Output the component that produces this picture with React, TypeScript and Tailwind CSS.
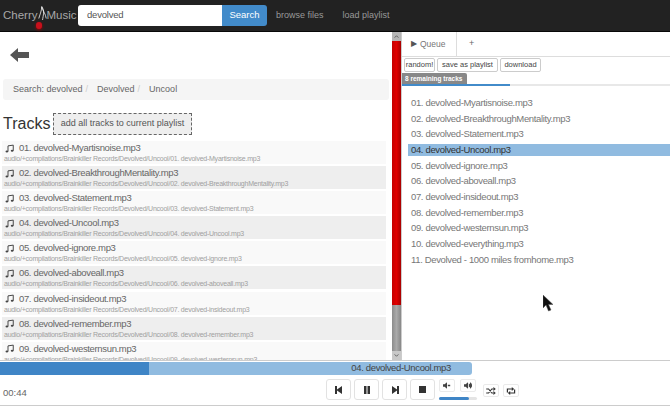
import React from "react";

const tracks = [
  "01. devolved-Myartisnoise.mp3",
  "02. devolved-BreakthroughMentality.mp3",
  "03. devolved-Statement.mp3",
  "04. devolved-Uncool.mp3",
  "05. devolved-ignore.mp3",
  "06. devolved-aboveall.mp3",
  "07. devolved-insideout.mp3",
  "08. devolved-remember.mp3",
  "09. devolved-westernsun.mp3",
];

const queue = [
  ...tracks,
  "10. devolved-everything.mp3",
  "11. Devolved - 1000 miles fromhome.mp3",
];

function NoteIcon() {
  return (
    <svg viewBox="0 0 12 12" className="w-[9px] h-[9px] shrink-0 fill-none stroke-[#444]">
      <path d="M4 10V2.500L11 1.500V9" strokeWidth="1.300" />
      <ellipse cx="2.500" cy="10" rx="1.800" ry="1.300" fill="#444" stroke="none" />
      <ellipse cx="9.500" cy="9" rx="1.800" ry="1.300" fill="#444" stroke="none" />
    </svg>
  );
}

function TrackRow({ name, odd }: { name: string; odd: boolean }) {
  return (
    <div className={`h-[23px] mb-[2.1px] pl-[2px] shrink-0 overflow-hidden ${odd ? "bg-[#f9f9f9]" : "bg-[#eeeeee]"}`}>
      <div className="flex items-center gap-[5px] h-[13px] pt-[1px] pl-[1px]">
        <NoteIcon />
        <span className="text-[9.5px] tracking-[-0.35px] text-[#666] leading-[12px]">{name}</span>
      </div>
      <div className="text-[7px] tracking-[-0.24px] text-[#a0a0a0] leading-[9px] whitespace-nowrap">
        audio/+compilations/Brainkiller Records/Devolved/Uncool/{name}
      </div>
    </div>
  );
}

function CtrlButton({ children }: { children: React.ReactNode }) {
  return (
    <button className="w-[25px] h-[21px] flex items-center justify-center border border-[#e2e2e2] rounded-[3px] bg-white">
      {children}
    </button>
  );
}

function SmallButton({ children }: { children: React.ReactNode }) {
  return (
    <button className="w-[16px] h-[13px] flex items-center justify-center border border-[#eaeaea] rounded-[2px] bg-white">
      {children}
    </button>
  );
}

export default function App() {
  return (
    <div className="relative w-[670px] h-[406px] overflow-hidden bg-white flex flex-col font-['Liberation_Sans',Arial,sans-serif]">
      {/* navbar */}
      <div className="h-[32px] shrink-0 bg-[#222222] border-b border-[#080808] flex items-center">
        <div className="w-[78px] shrink-0 relative flex items-center pl-[3px] text-[11.5px] text-[#a8a8a8] h-full">
          <span>Cherry</span>
          <svg viewBox="0 0 12 24" className="w-[9px] h-[20px] mt-[-3px] stroke-white fill-none shrink-0" strokeWidth="1">
            <path d="M6 20 C7 14 9 8 5 2 C5 8 2 14 1 18 M5 3 C7 8 10 12 11 18" />
          </svg>
          <span>Music</span>
          <span className="absolute left-[36px] top-[22px] w-[6px] h-[7px] rounded-full bg-[#c8101c] shadow-[0_1px_3px_#a00000]" />
        </div>
        <div className="w-[144px] h-[21px] bg-white rounded-l-[3px] flex items-center pl-[9px] text-[9.5px] tracking-[-0.2px] text-[#555]">
          devolved
        </div>
        <button className="w-[45px] h-[21px] bg-[#428bca] rounded-r-[3px] text-[9.5px] text-white">Search</button>
        <span className="ml-[9px] text-[9px] text-[#999]">browse files</span>
        <span className="ml-[19px] text-[9px] text-[#999]">load playlist</span>
      </div>

      {/* main area */}
      <div className="h-[328px] shrink-0 flex">
        <div className="w-[392px] shrink-0 flex flex-col overflow-hidden">
          <div className="h-[47px] shrink-0 flex items-center pl-[10px] pb-[10px]">
            <svg viewBox="0 0 19 14" className="w-[19px] h-[14px] fill-[#555] mt-[8px]">
              <path d="M0 7 8 0v4h11v6H8v4z" />
            </svg>
          </div>
          <div className="h-[21px] mx-[3px] shrink-0 bg-[#f5f5f5] rounded-[3px] flex items-center pl-[10px] text-[9px] text-[#666]">
            <span>Search: devolved</span>
            <span className="text-[#ccc] ml-[3px]">/</span>
            <span className="ml-[9px]">Devolved</span>
            <span className="text-[#ccc] ml-[3px]">/</span>
            <span className="ml-[9px]">Uncool</span>
          </div>
          <div className="mt-[13px] h-[22px] shrink-0 flex items-center pl-[3px]">
            <span className="text-[16px] text-[#333] w-[50px]">Tracks</span>
            <button className="w-[139px] h-[22px] bg-[#eeeeee] border border-dashed border-[#666] text-[9px] text-[#555]">
              add all tracks to current playlist
            </button>
          </div>
          <div className="mt-[6px] ml-[2px] w-[384px] flex flex-col">
            {tracks.map((t, i) => (
              <TrackRow key={t} name={t} odd={i % 2 === 0} />
            ))}
          </div>
        </div>

        {/* scrollbar */}
        <div className="w-[9px] shrink-0 flex flex-col bg-[#9a9a9a]">
          <div className="h-[9px] bg-[#b5b5b5] flex items-center justify-center">
            <svg viewBox="0 0 6 4" className="w-[5px] h-[3px] stroke-[#444] fill-none"><path d="M.5 3.500 3 1l2.500 2.500" /></svg>
          </div>
          <div className="h-[264px] bg-gradient-to-r from-[#c40000] via-[#e00000] to-[#a80000]" />
          <div className="flex-1 bg-gradient-to-r from-[#8c8c8c] via-[#aaaaaa] to-[#888888]" />
          <div className="h-[9px] bg-[#c8c8c8] flex items-center justify-center">
            <svg viewBox="0 0 6 4" className="w-[5px] h-[3px] stroke-[#444] fill-none"><path d="M.5.5 3 3 5.500.5" /></svg>
          </div>
        </div>

        {/* queue */}
        <div className="flex-1 flex flex-col min-w-0 border-l border-[#cccccc]">
          <div className="h-[25px] shrink-0 flex items-center border-b border-[#dddddd]">
            <div className="w-[55px] h-[25px] border-r border-[#dddddd] flex items-center pl-[9px] gap-[3px] text-[8.5px] text-[#777]">
              <span className="text-[8px] text-[#555]">▶</span> Queue
            </div>
            <span className="ml-[12px] text-[9px] text-[#666]">+</span>
          </div>
          <div className="flex gap-[2px] pl-[2px] pt-[1px] h-[15px] shrink-0">
            {["random!", "save as playlist", "download"].map((b, i) => (
              <button
                key={b}
                className={`h-[14px] border border-[#cccccc] rounded-[2px] text-[7.5px] text-[#444] ${i === 0 ? "w-[31px]" : i === 1 ? "w-[61px]" : "w-[41px]"}`}
              >
                {b}
              </button>
            ))}
          </div>
          <div className="w-[65px] h-[11px] mt-[1px] shrink-0 bg-[#888888] rounded-tr-[2px] text-[6.5px] font-bold text-white flex items-center pl-[3px]">
            8 remaining tracks
          </div>
          <div className="h-[2px] shrink-0 bg-[#e8e8e8]">
            <div className="w-[108px] h-[2px] bg-[#428bca]" />
          </div>
          <div className="mt-[11px] flex flex-col">
            {queue.map((t, i) => (
              <div
                key={t}
                className={`h-[12px] mb-[3.7px] ml-[6px] pl-[3px] flex items-center text-[9.5px] tracking-[-0.35px] ${i === 3 ? "bg-[#90bbe0] text-[#333]" : "text-[#777]"}`}
              >
                {t}
              </div>
            ))}
          </div>
        </div>
      </div>

      {/* player */}
      <div className="flex-1 flex flex-col border-t border-[#cccccc] border-b-[#cccccc] border-b">
        <div className="mt-[1px] w-[472px] h-[13px] shrink-0 rounded-r-[3px] bg-[#90bbe0] relative flex items-center justify-end pr-[21px] text-[9.5px] tracking-[-0.35px] text-[#444] overflow-hidden">
          <div className="absolute left-0 top-0 bottom-0 w-[149px] bg-[#3f85c6]" />
          <span className="relative">04. devolved-Uncool.mp3</span>
        </div>
        <div className="flex items-start">
          <span className="w-[326px] pt-[11px] pl-[3px] text-[9.5px] text-[#666] shrink-0">00:44</span>
          <div className="flex gap-[3px] pt-[4px]">
            <CtrlButton>
              <svg viewBox="0 0 8 8" className="w-[8px] h-[8px] fill-[#333]"><path d="M0 0h2v3.500L7 0v8L2 4.500V8H0z" /></svg>
            </CtrlButton>
            <CtrlButton>
              <svg viewBox="0 0 8 8" className="w-[8px] h-[8px] fill-[#333]"><path d="M1 0h2.500v8H1zM4.500 0H7v8H4.500z" /></svg>
            </CtrlButton>
            <CtrlButton>
              <svg viewBox="0 0 8 8" className="w-[8px] h-[8px] fill-[#333]"><path d="M8 0H6v3.500L1 0v8l5-3.500V8h2z" /></svg>
            </CtrlButton>
            <CtrlButton>
              <svg viewBox="0 0 8 8" className="w-[7px] h-[7px] fill-[#333]"><path d="M0 0h8v8H0z" /></svg>
            </CtrlButton>
          </div>
          <div className="ml-[4px] pt-[4px] w-[38px]">
            <div className="flex gap-[5px]">
              <SmallButton>
                <svg viewBox="0 0 10 8" className="w-[8px] h-[7px] fill-[#444]"><path d="M0 2.500h2L5 0v8L2 5.500H0zM6 3h3v2H6z" /></svg>
              </SmallButton>
              <SmallButton>
                <svg viewBox="0 0 10 8" className="w-[8px] h-[7px] fill-[#444]"><path d="M0 2.500h2L5 0v8L2 5.500H0zM6 1.500c2.500 1 2.500 4 0 5zM7.500 0c3.500 1.500 3.500 6.500 0 8z" /></svg>
              </SmallButton>
            </div>
            <div className="mt-[5px] h-[3px] rounded-[2px] bg-[#e4e4e4]">
              <div className="w-[30px] h-[3px] rounded-[2px] bg-[#3f85c6]" />
            </div>
          </div>
          <div className="ml-[6px] pt-[9px] flex gap-[4px]">
            <SmallButton>
              <svg viewBox="0 0 12 10" className="w-[10px] h-[8px]">
                <path d="M0 2.500h3l4 5h2M0 7.500h3l4-5h2" stroke="#333" strokeWidth="1.300" fill="none" />
                <path d="M9 0l3 2.500L9 5zM9 5l3 2.500L9 10z" fill="#333" />
              </svg>
            </SmallButton>
            <SmallButton>
              <svg viewBox="0 0 12 10" className="w-[10px] h-[8px]">
                <path d="M1.500 7V2.500h6M10.500 3v4.500h-6" stroke="#333" strokeWidth="1.500" fill="none" />
                <path d="M7 0l3 2.500L7 5zM5 5 2 7.500 5 10z" fill="#333" />
              </svg>
            </SmallButton>
          </div>
        </div>
      </div>

      {/* mouse pointer */}
      <svg viewBox="0 0 11 17" className="absolute left-[543px] top-[295px] w-[11px] h-[17px]">
        <path d="M0 0v13l3-3 2.500 6 2.500-1-2.500-5.500H10z" fill="#111" stroke="#555" strokeWidth="0.500" />
      </svg>
    </div>
  );
}
